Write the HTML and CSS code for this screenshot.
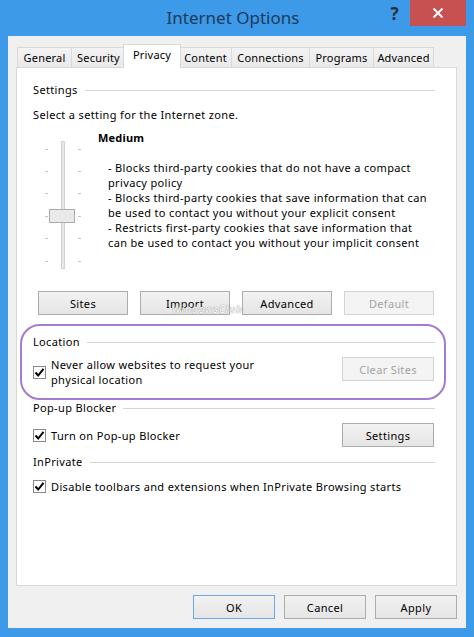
FILE: index.html
```html
<!DOCTYPE html>
<html lang="en">
<head>
    <meta charset="UTF-8">
    <meta name="viewport" content="width=device-width, initial-scale=1.0">
    <title>Internet Options</title>
    <link rel="stylesheet" href="styles.css">
</head>
<body>
<div class="window">
    <div class="titlebar">
        <span></span>
        <h1 class="title">Internet Options</h1>
        <div class="caption-buttons">
            <span class="help">?</span>
            <span class="close">
                <svg width="12" height="10" viewBox="0 0 12 10"><path d="M1.5 0.5 L10.5 9.5 M10.5 0.5 L1.5 9.5" stroke="#fff" stroke-width="2"/></svg>
            </span>
        </div>
    </div>

    <div class="client">
        <div class="tabs">
            <div class="tab">General</div>
            <div class="tab">Security</div>
            <div class="tab selected">Privacy</div>
            <div class="tab">Content</div>
            <div class="tab">Connections</div>
            <div class="tab">Programs</div>
            <div class="tab">Advanced</div>
        </div>

        <div class="panel">
            <!-- Settings -->
            <div class="group-header"><span>Settings</span></div>
            <p class="zone-text">Select a setting for the Internet zone.</p>
            <div class="level">
                <svg class="slider" width="65" height="128" viewBox="0 0 65 128">
                    <rect x="28.5" y="0.5" width="3" height="127" fill="#e7e7e7" stroke="#d2d2d2"/>
                    <g stroke="#c4c4c4" stroke-width="1">
                        <path d="M12 8.5h3M45 8.5h3"/>
                        <path d="M12 30.5h3M45 30.5h3"/>
                        <path d="M12 52.5h3M45 52.5h3"/>
                        <path d="M12 75.5h3M45 75.5h3"/>
                        <path d="M12 97.5h3M45 97.5h3"/>
                        <path d="M12 120.5h3M45 120.5h3"/>
                    </g>
                    <rect x="16.5" y="68.5" width="25" height="13" fill="#e9e9e9" stroke="#acacac"/>
                </svg>
                <div class="level-text">
                    <div class="level-name">Medium</div>
                    <div class="level-desc">
                        - Blocks third-party cookies that do not have a compact<br>
                        privacy policy<br>
                        - Blocks third-party cookies that save information that can<br>
                        be used to contact you without your explicit consent<br>
                        - Restricts first-party cookies that save information that<br>
                        can be used to contact you without your implicit consent
                    </div>
                </div>
            </div>
            <div class="settings-buttons">
                <button class="btn">Sites</button>
                <button class="btn">Import</button>
                <button class="btn">Advanced</button>
                <button class="btn" disabled>Default</button>
                <span class="watermark">WindowsClub</span>
            </div>

            <!-- Location -->
            <div class="location">
                <div class="group-header"><span>Location</span></div>
                <div class="option-row top">
                    <label class="check-label">
                        <span class="check"><svg width="11" height="11" viewBox="0 0 11 11"><path d="M1.5 5.5 L4.2 8.5 L9.5 1.8" fill="none" stroke="#000" stroke-width="2"/></svg></span>
                        <span>Never allow websites to request your<br>physical location</span>
                    </label>
                    <button class="btn wide" disabled>Clear Sites</button>
                </div>
            </div>

            <!-- Pop-up Blocker -->
            <div class="group-header popup-header"><span>Pop-up Blocker</span></div>
            <div class="option-row popup-row">
                <label class="check-label">
                    <span class="check"><svg width="11" height="11" viewBox="0 0 11 11"><path d="M1.5 5.5 L4.2 8.5 L9.5 1.8" fill="none" stroke="#000" stroke-width="2"/></svg></span>
                    <span>Turn on Pop-up Blocker</span>
                </label>
                <button class="btn wide">Settings</button>
            </div>

            <!-- InPrivate -->
            <div class="group-header inprivate-header"><span>InPrivate</span></div>
            <div class="option-row inprivate-row">
                <label class="check-label">
                    <span class="check"><svg width="11" height="11" viewBox="0 0 11 11"><path d="M1.5 5.5 L4.2 8.5 L9.5 1.8" fill="none" stroke="#000" stroke-width="2"/></svg></span>
                    <span>Disable toolbars and extensions when InPrivate Browsing starts</span>
                </label>
            </div>
        </div>

        <div class="dialog-buttons">
            <button class="btn dialog default">OK</button>
            <button class="btn dialog">Cancel</button>
            <button class="btn dialog">Apply</button>
        </div>
    </div>
</div>
</body>
</html>
```

FILE: styles.css
```css
body {
    margin: 0;
    background-color: #3c9ae8;
    font-family: "Noto Sans", "Open Sans", sans-serif;
    font-size: 11px;
    letter-spacing: 0.35px;
    color: #000;
}
.window {
    width: 474px;
    height: 637px;
    display: flex;
    flex-direction: column;
}

/* Barra de titulo */
.titlebar {
    height: 36px;
    display: grid;
    grid-template-columns: 1fr auto 1fr;
    padding-right: 8px;
}
.title {
    margin: 0;
    font-weight: normal;
    font-size: 17px;
    letter-spacing: 0;
    line-height: 35px;
    color: #1e395b;
}
.caption-buttons {
    justify-self: end;
    display: flex;
    align-items: flex-start;
}
.help {
    font-weight: bold;
    font-size: 17px;
    line-height: 20px;
    color: #2a2f36;
    margin: 4px 11px 0 0;
}
.close {
    width: 56px;
    height: 26px;
    background-color: #c75050;
    display: flex;
    align-items: center;
    justify-content: center;
}

/* Area do cliente */
.client {
    flex: 1;
    margin: 0 8px 9px;
    background-color: #f0f0f0;
    padding: 8px 9px 9px 8px;
    display: flex;
    flex-direction: column;
}
.tabs {
    display: flex;
    align-items: flex-end;
    height: 24px;
    margin: 0 0 -1px 1px;
    position: relative;
    z-index: 1;
}
.tab {
    box-sizing: border-box;
    height: 20px;
    line-height: 19px;
    margin-bottom: 1px;
    margin-left: -1px;
    border: 1px solid #d9d9d9;
    border-bottom: none;
    background: linear-gradient(#f3f3f3, #e9e9e9);
    text-align: center;
    letter-spacing: 0.2px;
}
.tab:nth-child(1) { width: 55px; margin-left: 0; }
.tab:nth-child(2) { width: 55px; }
.tab:nth-child(4) { width: 53px; }
.tab:nth-child(5) { width: 79px; }
.tab:nth-child(6) { width: 65px; }
.tab:nth-child(7) { width: 61px; }
.tab.selected {
    width: 58px;
    height: 24px;
    line-height: 19px;
    margin: 0 -1px 0 -3px;
    background: #fff;
    position: relative;
    z-index: 2;
}

.panel {
    flex: 1;
    background-color: #fff;
    border: 1px solid #d9d9d9;
    padding: 14px 21px 0 16px;
}
.group-header {
    display: flex;
    align-items: center;
    gap: 7px;
    line-height: 15px;
}
.group-header::after {
    content: "";
    flex: 1;
    height: 1px;
    margin-top: 2px;
    background-color: #d5d5d5;
}
.zone-text {
    margin: 10px 0 0;
    line-height: 15px;
}
.level {
    display: flex;
    align-items: flex-start;
    margin-top: 8px;
}
.slider {
    margin-top: 11px;
    flex-shrink: 0;
}
.level-text {
    line-height: 15px;
    white-space: nowrap;
}
.level-name {
    font-weight: bold;
    letter-spacing: 0.2px;
}
.level-desc {
    margin-top: 15px;
    padding-left: 10px;
}

button.btn {
    box-sizing: border-box;
    height: 24px;
    width: 90px;
    padding: 0;
    border: 1px solid #acacac;
    background: linear-gradient(#f2f2f2, #e5e5e5);
    font-family: inherit;
    font-size: 11px;
    letter-spacing: 0.35px;
    color: #000;
}
button.btn:disabled {
    border-color: #d5d5d5;
    background: #f4f4f4;
    color: #a3a3a3;
}
button.wide {
    width: 92px;
    margin-right: 1px;
}
.settings-buttons {
    position: relative;
    display: flex;
    gap: 12px;
    margin: 22px 0 0 5px;
}
.watermark {
    position: absolute;
    left: 134px;
    top: 12px;
    font-style: italic;
    font-size: 10px;
    line-height: 12px;
    letter-spacing: 1px;
    color: #fff;
    text-shadow: 0 0 1px #999, 0 0 1px #999;
}

.location {
    position: relative;
    margin-top: 19px;
}
.location::before {
    content: "";
    position: absolute;
    top: -10px;
    left: -13px;
    right: -11px;
    bottom: -13px;
    border: 2px solid #a17ccf;
    border-radius: 20px;
}
.option-row {
    display: flex;
    justify-content: space-between;
    align-items: center;
    margin-top: 8px;
    line-height: 15px;
}
.option-row.top {
    align-items: flex-start;
}
.check-label {
    display: flex;
    align-items: center;
    gap: 5px;
}
.check {
    box-sizing: border-box;
    width: 13px;
    height: 13px;
    border: 1px solid #8a8a8a;
    background: #fff;
    display: flex;
    align-items: center;
    justify-content: center;
    flex-shrink: 0;
}
.popup-header {
    margin-top: 13px;
}
.inprivate-header {
    margin-top: 7px;
}
.inprivate-row {
    margin-top: 10px;
}

.dialog-buttons {
    display: flex;
    justify-content: flex-end;
    gap: 9px;
    margin-top: 9px;
}
button.dialog {
    width: 82px;
}
button.default {
    border-color: #6aa8e6;
}
```
